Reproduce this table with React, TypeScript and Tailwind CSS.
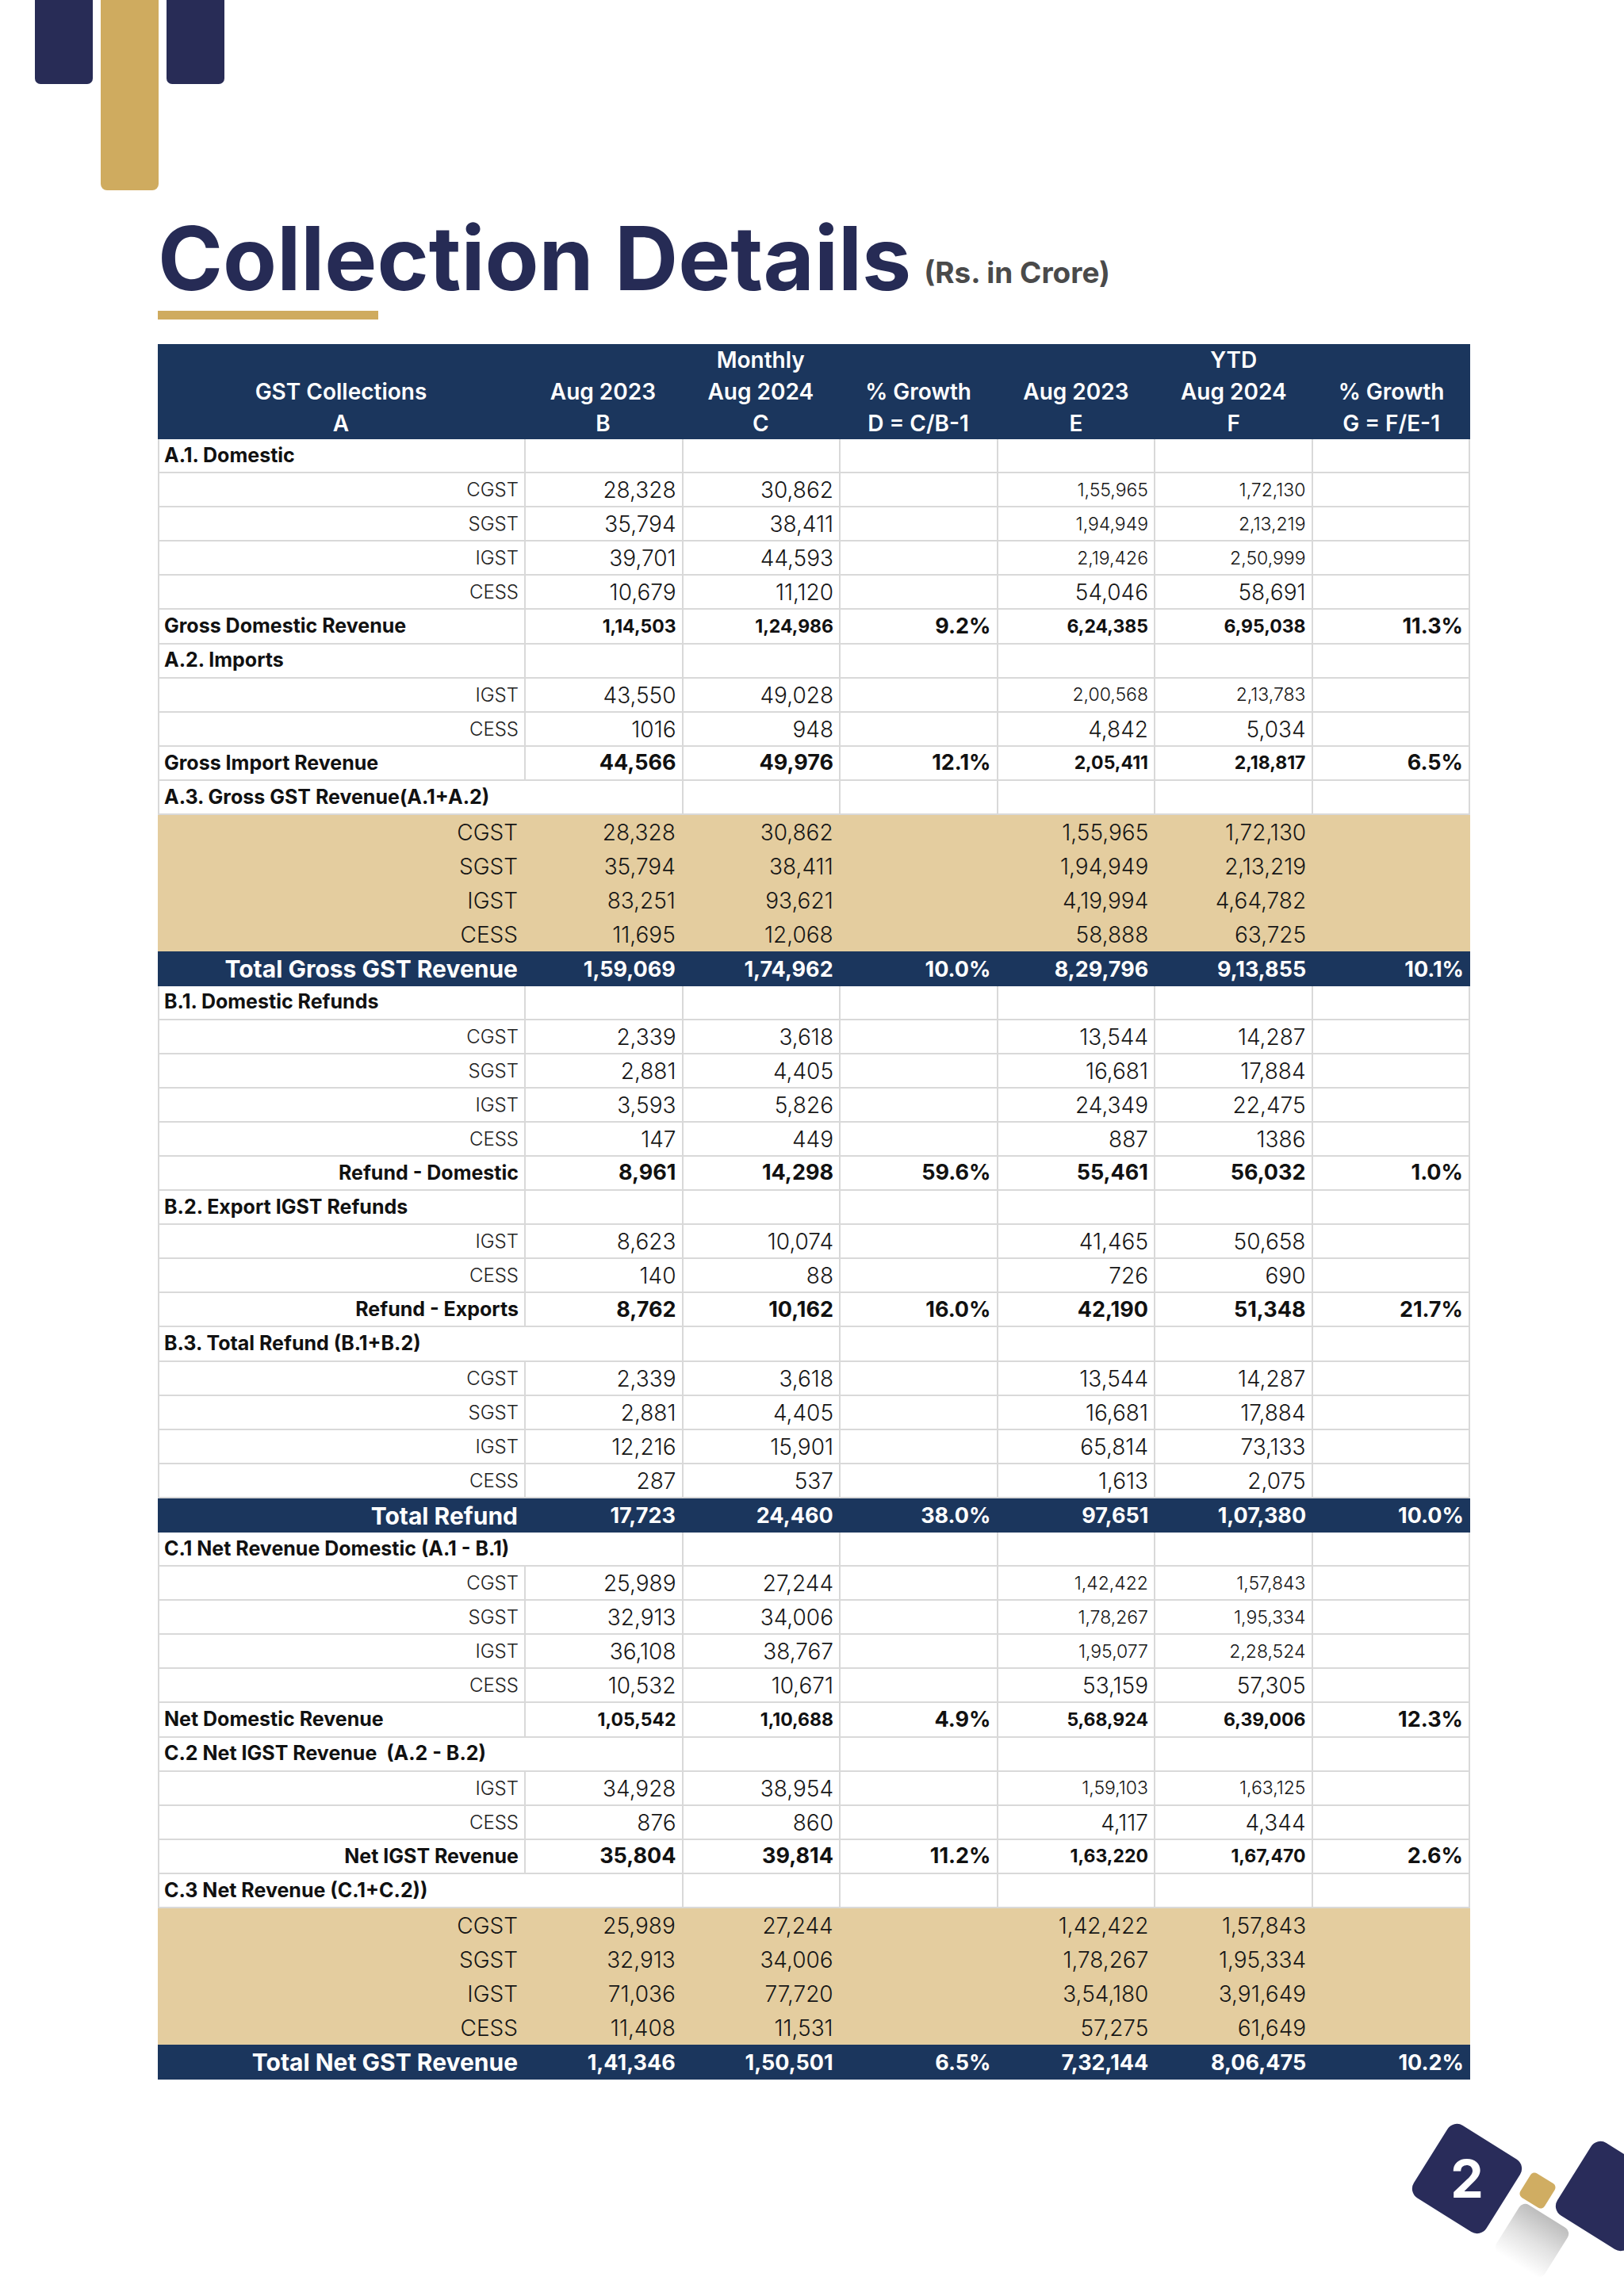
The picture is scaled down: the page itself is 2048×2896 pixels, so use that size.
import React from "react";

type Item = { t: "item"; l: string; v: [string, string, string, string]; s?: boolean };
type Sec = { t: "sec"; l: string; span?: boolean };
type Gold = { t: "gold"; l: string; v: [string, string, string, string] };
type Tot = {
  t: "tot";
  l: string;
  right?: boolean;
  v: [string, string, string, string, string, string];
  bcS?: boolean;
  efS?: boolean;
};
type Navy = { t: "navy"; l: string; v: [string, string, string, string, string, string] };
type Row = Item | Sec | Gold | Tot | Navy;

const rows: Row[] = [
  { t: "sec", l: "A.1. Domestic" },
  { t: "item", l: "CGST", v: ["28,328", "30,862", "1,55,965", "1,72,130"], s: true },
  { t: "item", l: "SGST", v: ["35,794", "38,411", "1,94,949", "2,13,219"], s: true },
  { t: "item", l: "IGST", v: ["39,701", "44,593", "2,19,426", "2,50,999"], s: true },
  { t: "item", l: "CESS", v: ["10,679", "11,120", "54,046", "58,691"] },
  { t: "tot", l: "Gross Domestic Revenue", v: ["1,14,503", "1,24,986", "9.2%", "6,24,385", "6,95,038", "11.3%"], bcS: true, efS: true },
  { t: "sec", l: "A.2. Imports" },
  { t: "item", l: "IGST", v: ["43,550", "49,028", "2,00,568", "2,13,783"], s: true },
  { t: "item", l: "CESS", v: ["1016", "948", "4,842", "5,034"] },
  { t: "tot", l: "Gross Import Revenue", v: ["44,566", "49,976", "12.1%", "2,05,411", "2,18,817", "6.5%"], efS: true },
  { t: "sec", l: "A.3. Gross GST Revenue(A.1+A.2)", span: true },
  { t: "gold", l: "CGST", v: ["28,328", "30,862", "1,55,965", "1,72,130"] },
  { t: "gold", l: "SGST", v: ["35,794", "38,411", "1,94,949", "2,13,219"] },
  { t: "gold", l: "IGST", v: ["83,251", "93,621", "4,19,994", "4,64,782"] },
  { t: "gold", l: "CESS", v: ["11,695", "12,068", "58,888", "63,725"] },
  { t: "navy", l: "Total Gross GST Revenue", v: ["1,59,069", "1,74,962", "10.0%", "8,29,796", "9,13,855", "10.1%"] },
  { t: "sec", l: "B.1. Domestic Refunds" },
  { t: "item", l: "CGST", v: ["2,339", "3,618", "13,544", "14,287"] },
  { t: "item", l: "SGST", v: ["2,881", "4,405", "16,681", "17,884"] },
  { t: "item", l: "IGST", v: ["3,593", "5,826", "24,349", "22,475"] },
  { t: "item", l: "CESS", v: ["147", "449", "887", "1386"] },
  { t: "tot", l: "Refund - Domestic", right: true, v: ["8,961", "14,298", "59.6%", "55,461", "56,032", "1.0%"] },
  { t: "sec", l: "B.2. Export IGST Refunds" },
  { t: "item", l: "IGST", v: ["8,623", "10,074", "41,465", "50,658"] },
  { t: "item", l: "CESS", v: ["140", "88", "726", "690"] },
  { t: "tot", l: "Refund - Exports", right: true, v: ["8,762", "10,162", "16.0%", "42,190", "51,348", "21.7%"] },
  { t: "sec", l: "B.3. Total Refund (B.1+B.2)", span: true },
  { t: "item", l: "CGST", v: ["2,339", "3,618", "13,544", "14,287"] },
  { t: "item", l: "SGST", v: ["2,881", "4,405", "16,681", "17,884"] },
  { t: "item", l: "IGST", v: ["12,216", "15,901", "65,814", "73,133"] },
  { t: "item", l: "CESS", v: ["287", "537", "1,613", "2,075"] },
  { t: "navy", l: "Total Refund", v: ["17,723", "24,460", "38.0%", "97,651", "1,07,380", "10.0%"] },
  { t: "sec", l: "C.1 Net Revenue Domestic (A.1 - B.1)", span: true },
  { t: "item", l: "CGST", v: ["25,989", "27,244", "1,42,422", "1,57,843"], s: true },
  { t: "item", l: "SGST", v: ["32,913", "34,006", "1,78,267", "1,95,334"], s: true },
  { t: "item", l: "IGST", v: ["36,108", "38,767", "1,95,077", "2,28,524"], s: true },
  { t: "item", l: "CESS", v: ["10,532", "10,671", "53,159", "57,305"] },
  { t: "tot", l: "Net Domestic Revenue", v: ["1,05,542", "1,10,688", "4.9%", "5,68,924", "6,39,006", "12.3%"], bcS: true, efS: true },
  { t: "sec", l: "C.2 Net IGST Revenue  (A.2 - B.2)", span: true },
  { t: "item", l: "IGST", v: ["34,928", "38,954", "1,59,103", "1,63,125"], s: true },
  { t: "item", l: "CESS", v: ["876", "860", "4,117", "4,344"] },
  { t: "tot", l: "Net IGST Revenue", right: true, v: ["35,804", "39,814", "11.2%", "1,63,220", "1,67,470", "2.6%"], efS: true },
  { t: "sec", l: "C.3 Net Revenue (C.1+C.2))", span: true },
  { t: "gold", l: "CGST", v: ["25,989", "27,244", "1,42,422", "1,57,843"] },
  { t: "gold", l: "SGST", v: ["32,913", "34,006", "1,78,267", "1,95,334"] },
  { t: "gold", l: "IGST", v: ["71,036", "77,720", "3,54,180", "3,91,649"] },
  { t: "gold", l: "CESS", v: ["11,408", "11,531", "57,275", "61,649"] },
  { t: "navy", l: "Total Net GST Revenue", v: ["1,41,346", "1,50,501", "6.5%", "7,32,144", "8,06,475", "10.2%"] },
];

const GRID = "grid grid-cols-[462px_repeat(6,minmax(0,1fr))] h-[43.1px]";
const WROW = "border-l-2 border-b-2 border-[#d9d9d9] bg-white";
const CELL = "flex items-center justify-end pr-[7px] border-r-2 border-[#d9d9d9] whitespace-nowrap";
const PCELL = "flex items-center justify-end pr-[8px] whitespace-nowrap";

const NUM = "text-[28px] font-light text-[#161616]";
const NUMS = "text-[23px] font-light text-[#161616]";
const BNUM = "text-[27px] font-bold text-[#111]";
const BNUMS = "text-[23px] font-bold text-[#111]";

function RowView({ r }: { r: Row }) {
  if (r.t === "sec") {
    return (
      <div className={`${GRID} ${WROW}`}>
        <div
          className={`${r.span ? "col-span-2" : ""} flex items-center pl-[6px] border-r-2 border-[#d9d9d9] text-[25px] font-bold text-[#111] whitespace-pre`}
        >
          {r.l}
        </div>
        {(r.span ? [0, 1, 2, 3, 4] : [0, 1, 2, 3, 4, 5]).map((i) => (
          <div key={i} className={CELL} />
        ))}
      </div>
    );
  }
  if (r.t === "item") {
    const ytd = r.s ? NUMS : NUM;
    return (
      <div className={`${GRID} ${WROW}`}>
        <div className={`${CELL} text-[24px] font-light text-[#222]`}>{r.l}</div>
        <div className={`${CELL} ${NUM}`}>{r.v[0]}</div>
        <div className={`${CELL} ${NUM}`}>{r.v[1]}</div>
        <div className={CELL} />
        <div className={`${CELL} ${ytd}`}>{r.v[2]}</div>
        <div className={`${CELL} ${ytd}`}>{r.v[3]}</div>
        <div className={CELL} />
      </div>
    );
  }
  if (r.t === "gold") {
    return (
      <div className={`${GRID} bg-[#e4cd9f] text-[#151515]`}>
        <div className={`${PCELL} text-[28px] font-light`}>{r.l}</div>
        <div className={`${PCELL} ${NUM}`}>{r.v[0]}</div>
        <div className={`${PCELL} ${NUM}`}>{r.v[1]}</div>
        <div />
        <div className={`${PCELL} ${NUM}`}>{r.v[2]}</div>
        <div className={`${PCELL} ${NUM}`}>{r.v[3]}</div>
        <div />
      </div>
    );
  }
  if (r.t === "navy") {
    return (
      <div className={`${GRID} bg-[#1b365d] text-white`}>
        <div className={`${PCELL} text-[30px] font-bold`}>{r.l}</div>
        {r.v.map((x, i) => (
          <div key={i} className={`${PCELL} text-[27px] font-bold`}>
            {x}
          </div>
        ))}
      </div>
    );
  }
  const bc = r.bcS ? BNUMS : BNUM;
  const ef = r.efS ? BNUMS : BNUM;
  return (
    <div className={`${GRID} ${WROW}`}>
      <div
        className={`${r.right ? "justify-end pr-[7px]" : "justify-start pl-[6px]"} flex items-center border-r-2 border-[#d9d9d9] text-[25px] font-bold text-[#111] whitespace-nowrap`}
      >
        {r.l}
      </div>
      <div className={`${CELL} ${bc}`}>{r.v[0]}</div>
      <div className={`${CELL} ${bc}`}>{r.v[1]}</div>
      <div className={`${CELL} ${BNUM}`}>{r.v[2]}</div>
      <div className={`${CELL} ${ef}`}>{r.v[3]}</div>
      <div className={`${CELL} ${ef}`}>{r.v[4]}</div>
      <div className={`${CELL} ${BNUM}`}>{r.v[5]}</div>
    </div>
  );
}

const headerCols: [string, string, string][] = [
  ["", "GST Collections", "A"],
  ["", "Aug 2023", "B"],
  ["Monthly", "Aug 2024", "C"],
  ["", "% Growth", "D = C/B-1"],
  ["", "Aug 2023", "E"],
  ["YTD", "Aug 2024", "F"],
  ["", "% Growth", "G = F/E-1"],
];

export default function App() {
  return (
    <div className="relative w-[2048px] h-[2896px] overflow-hidden bg-white font-[Inter,sans-serif]">
      {/* logo bars */}
      <div className="flex items-start gap-[10px] pl-[44px] h-[240px]">
        <div className="w-[73px] h-[106px] rounded-b-[7px] bg-[#282c56]" />
        <div className="w-[73px] h-[240px] rounded-b-[8px] bg-[#cfab5f]" />
        <div className="w-[73px] h-[106px] rounded-b-[7px] bg-[#282c56]" />
      </div>

      <div className="pl-[199px] w-[1854px]">
        <div className="mt-[30px] flex items-end gap-[16px]">
          <h1 className="text-[111px] leading-none font-bold text-[#262b55]">Collection Details</h1>
          <span className="mb-[19px] text-[37px] leading-none font-bold text-[#4a4a4a]">(Rs. in Crore)</span>
        </div>
        <div className="mt-[11px] h-[11px] w-[278px] bg-[#cfab5f]" />

        <div className="mt-[31px] w-[1655px]">
          <div className="grid grid-cols-[462px_repeat(6,minmax(0,1fr))] h-[120px] bg-[#1b365d] text-white">
            {headerCols.map((c, i) => (
              <div key={i} className="flex flex-col">
                {c.map((line, j) => (
                  <div
                    key={j}
                    className="h-[40px] flex items-center justify-center text-[28px] font-semibold whitespace-nowrap"
                  >
                    {line}
                  </div>
                ))}
              </div>
            ))}
          </div>
          {rows.map((r, i) => (
            <RowView key={i} r={r} />
          ))}
        </div>
      </div>

      {/* page badge */}
      <div className="absolute left-[1796px] top-[2694px] w-[108px] h-[108px] rotate-[32deg] rounded-[14px] bg-[#292c5a]" />
      <div className="absolute left-[1796px] top-[2694px] w-[108px] h-[108px] flex items-center justify-center text-[66px] font-bold text-white leading-none">
        2
      </div>
      <div className="absolute left-[1921px] top-[2745px] w-[36px] h-[36px] rotate-[32deg] rounded-[6px] bg-[#d0ad62]" />
      <div className="absolute left-[1896px] top-[2790px] w-[72px] h-[72px] rotate-[32deg] rounded-[9px] bg-linear-to-b from-[#bdbdbd] via-[#e2e2e2] to-white" />
      <div className="absolute left-[1977px] top-[2716px] w-[108px] h-[108px] rotate-[32deg] rounded-[14px] bg-[#292c5a]" />
    </div>
  );
}
